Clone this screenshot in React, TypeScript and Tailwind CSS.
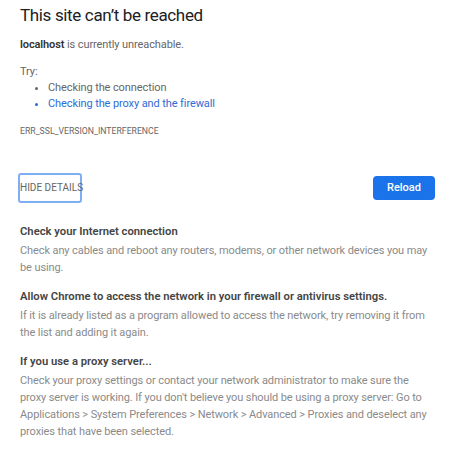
import React from 'react';

const App = () => {
  return (
    <div className="min-h-[460px] w-[474px] bg-white pl-5 pr-[39px] pt-[4px] text-[#646464]" style={{ fontFamily: 'Roboto, "Noto Sans", sans-serif' }}>
      <h1 className="text-[17px] leading-[22px] font-normal tracking-[-0.35px] text-[#202124]">This site can’t be reached</h1>

      <p className="mt-[10px] text-[11px] leading-[17px] tracking-[-0.1px] text-[#666]">
        <span className="font-semibold text-[#333]">localhost</span> is currently unreachable.
      </p>

      <div className="mt-[11px] text-[11px] leading-[16px] tracking-[-0.1px] text-[#666]">
        <p>Try:</p>
        <ul className="pl-[28px] list-disc">
          <li>Checking the connection</li>
          <li className="text-[#2f6bd4]">Checking the proxy and the firewall</li>
        </ul>
      </div>

      <p className="mt-[13px] text-[8.7px] leading-[12px] text-[#666]">ERR_SSL_VERSION_INTERFERENCE</p>

      {/* buttons */}
      <div className="mt-[36px] flex items-center justify-between">
        <button className="-ml-[2px] h-[30px] w-[64px] rounded-[3px] border-2 border-[#80aef5] bg-white px-0 text-[10px] leading-none text-[#666] whitespace-nowrap">
          HIDE DETAILS
        </button>
        <button className="h-[24px] w-[62px] rounded-[4px] bg-[#1a73e8] text-[11px] font-medium text-white">
          Reload
        </button>
      </div>

      <div className="text-[11px] leading-[17px] whitespace-nowrap">
        <h2 className="mt-[20px] text-[11.25px] font-semibold text-[#444]">Check your Internet connection</h2>
        <p className="mt-[2px] tracking-[-0.1px] text-[#8a8a8a]">
          Check any cables and reboot any routers, modems, or other network devices you may<br />
          be using.
        </p>

        <h2 className="mt-[12px] text-[11.25px] font-semibold text-[#444]">Allow Chrome to access the network in your firewall or antivirus settings.</h2>
        <p className="mt-[2px] tracking-[-0.1px] text-[#8a8a8a]">
          If it is already listed as a program allowed to access the network, try removing it from<br />
          the list and adding it again.
        </p>

        <h2 className="mt-[12px] text-[11.25px] font-semibold text-[#444]">If you use a proxy server...</h2>
        <p className="mt-[2px] tracking-[-0.1px] text-[#8a8a8a]">
          Check your proxy settings or contact your network administrator to make sure the<br />
          proxy server is working. If you don't believe you should be using a proxy server: Go to<br />
          Applications &gt; System Preferences &gt; Network &gt; Advanced &gt; Proxies and deselect any<br />
          proxies that have been selected.
        </p>
      </div>
    </div>
  );
};

export default App;
